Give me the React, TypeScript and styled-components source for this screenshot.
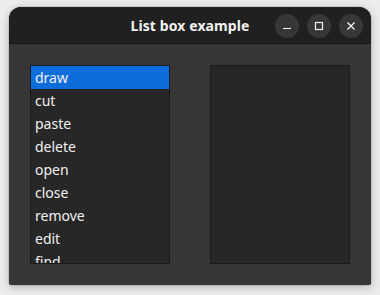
import React from "react";
import styled, { createGlobalStyle } from "styled-components";

const Global = createGlobalStyle`
  html, body { margin: 0; padding: 0; background: #ececec; }
  body { width: 380px; height: 295px; overflow: hidden; font-family: "Noto Sans", "Open Sans", sans-serif; }
`;

const Page = styled.div`
  padding: 7px 9px 10px 9px;
  width: 380px;
  height: 295px;
  box-sizing: border-box;
`;

const Window = styled.div`
  width: 362px;
  height: 278px;
  display: flex;
  flex-direction: column;
  border-radius: 12px 12px 2px 2px;
  overflow: hidden;
  background: #363636;
  box-shadow: 0 2px 8px rgba(0, 0, 0, 0.25), 0 0 0 1px rgba(0, 0, 0, 0.08);
`;

const TitleBar = styled.div`
  height: 36px;
  flex: none;
  background: #202020;
  border-bottom: 1px solid #151515;
  display: flex;
  align-items: center;
  position: relative;
`;

const Title = styled.div`
  flex: 1;
  text-align: center;
  color: #f2f2f2;
  font-weight: 700;
  font-size: 14px;
  letter-spacing: 0.1px;
  padding-top: 1px;
`;

const Controls = styled.div`
  position: absolute;
  right: 8px;
  top: 7px;
  display: flex;
  gap: 8px;
`;

const CtlButton = styled.div`
  width: 24px;
  height: 24px;
  border-radius: 50%;
  background: #373737;
  display: flex;
  align-items: center;
  justify-content: center;
`;

const Body = styled.div`
  flex: 1;
  display: flex;
  gap: 40px;
  padding: 21px;
`;

const ListBox = styled.div`
  width: 140px;
  height: 199px;
  box-sizing: border-box;
  border: 1px solid #1a1a1a;
  background: #272727;
  overflow: hidden;
  display: flex;
  flex-direction: column;
`;

const Row = styled.div<{ $selected?: boolean }>`
  height: 23px;
  flex: none;
  display: flex;
  align-items: center;
  padding-left: 4px;
  font-size: 14px;
  color: #f0f0f0;
  background: ${(p) => (p.$selected ? "#0e6ddd" : "transparent")};
`;

const EmptyBox = styled.div`
  width: 140px;
  height: 199px;
  box-sizing: border-box;
  border: 1px solid #1a1a1a;
  background: #272727;
`;

const items = ["draw", "cut", "paste", "delete", "open", "close", "remove", "edit", "find"];

export default function App() {
  return (
    <>
      <Global />
      <Page>
        <Window>
          <TitleBar>
            <Title>List box example</Title>
            <Controls>
              <CtlButton>
                <svg width="10" height="10" viewBox="0 0 10 10">
                  <path d="M1 7.5h8" stroke="#f2f2f2" strokeWidth="1.2" />
                </svg>
              </CtlButton>
              <CtlButton>
                <svg width="10" height="10" viewBox="0 0 10 10">
                  <rect x="1.5" y="1.5" width="7" height="7" fill="none" stroke="#f2f2f2" strokeWidth="1.2" />
                </svg>
              </CtlButton>
              <CtlButton>
                <svg width="10" height="10" viewBox="0 0 10 10">
                  <path d="M1.5 1.5l7 7M8.5 1.5l-7 7" stroke="#f2f2f2" strokeWidth="1.4" />
                </svg>
              </CtlButton>
            </Controls>
          </TitleBar>
          <Body>
            <ListBox>
              {items.map((it, i) => (
                <Row key={it} $selected={i === 0}>
                  {it}
                </Row>
              ))}
            </ListBox>
            <EmptyBox />
          </Body>
        </Window>
      </Page>
    </>
  );
}
